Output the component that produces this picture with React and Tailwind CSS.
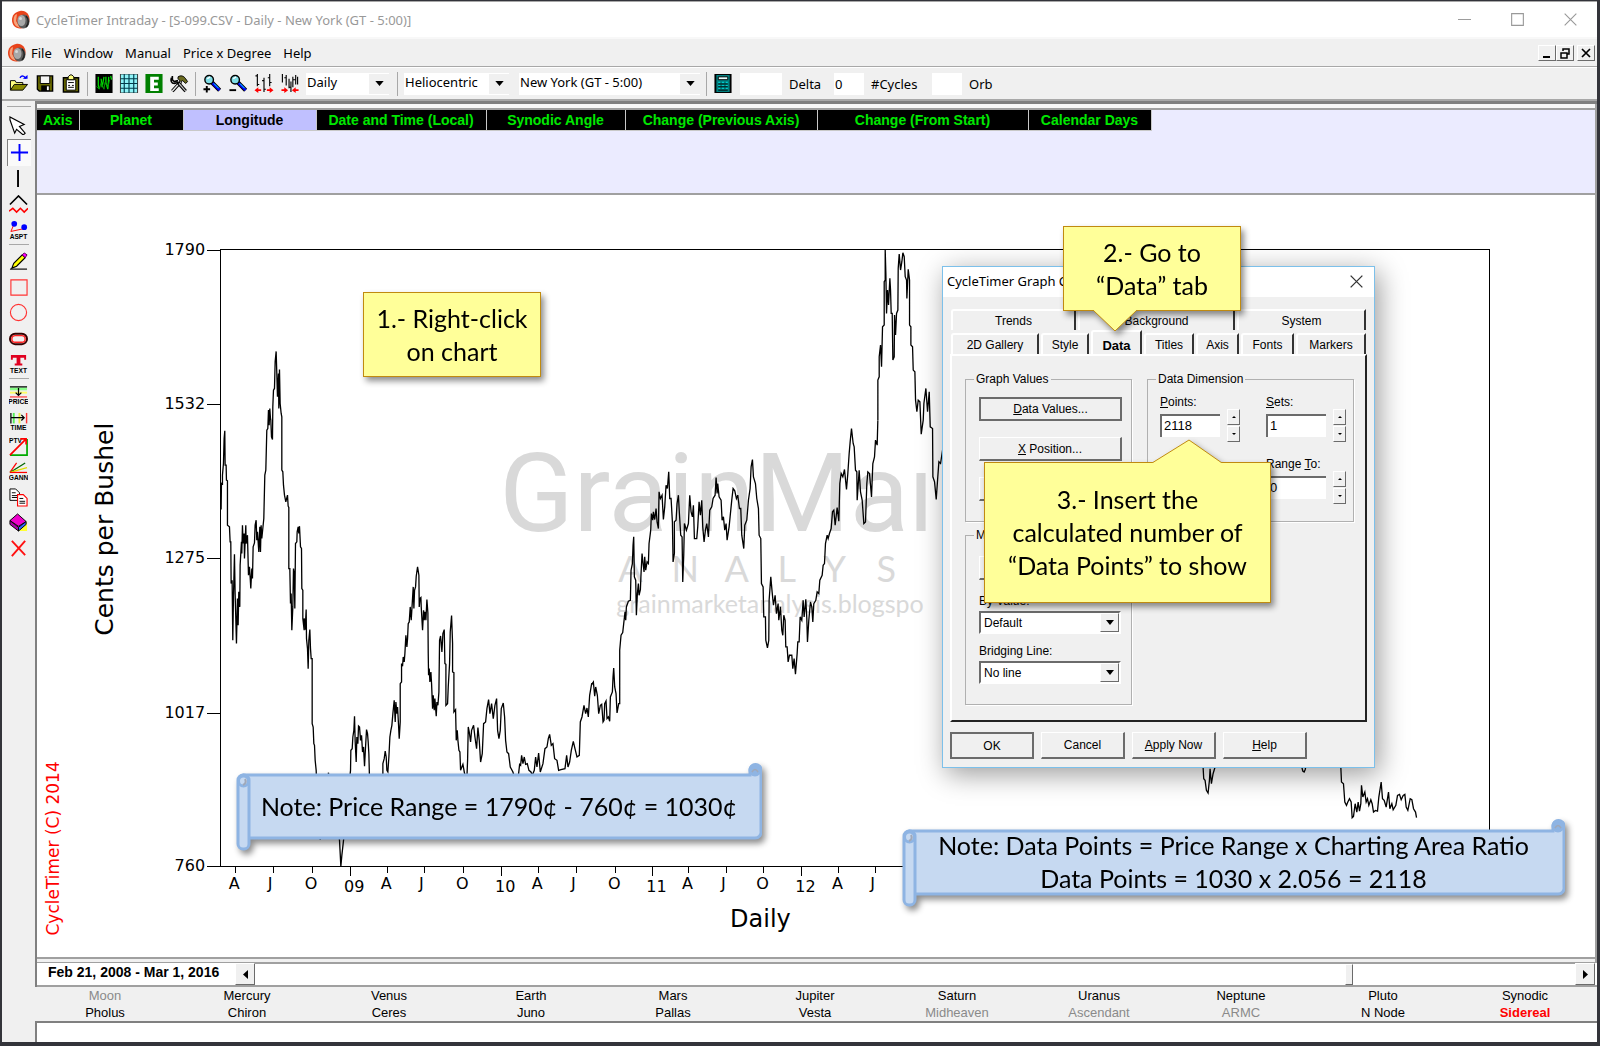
/**
 * App.jsx — CycleTimer Intraday main window
 *
 *   • title bar, menu bar, toolbar, drawing tools
 *   • price chart with the graph control dialog
 *   • numbered callouts and notes over the chart
 */

// ── Fonts ──────────────────────────────────────────────
const UI = "font-['Noto_Sans','Open_Sans',sans-serif]"
const ARIAL = "font-['Liberation_Sans',Arial,sans-serif]"
const NOTE = "font-['Lato','Open_Sans',sans-serif]"

const RAISED = 'border border-t-white border-l-white border-r-[#6b6b6b] border-b-[#6b6b6b] bg-[#f0f0f0]'

const MENUS = ['File', 'Window', 'Manual', 'Price x Degree', 'Help']

const AXIS_COLUMNS = [
  { label: 'Axis', width: 'w-[42px]' },
  { label: 'Planet', width: 'w-[104px]' },
  { label: 'Longitude', width: 'w-[133px]', active: true },
  { label: 'Date and Time (Local)', width: 'w-[170px]' },
  { label: 'Synodic Angle', width: 'w-[139px]' },
  { label: 'Change (Previous Axis)', width: 'w-[192px]' },
  { label: 'Change (From Start)', width: 'w-[211px]' },
  { label: 'Calendar Days', width: 'w-[123px]' },
]

const PLANETS = [
  [{ label: 'Moon', off: true }, { label: 'Pholus' }],
  [{ label: 'Mercury' }, { label: 'Chiron' }],
  [{ label: 'Venus' }, { label: 'Ceres' }],
  [{ label: 'Earth' }, { label: 'Juno' }],
  [{ label: 'Mars' }, { label: 'Pallas' }],
  [{ label: 'Jupiter' }, { label: 'Vesta' }],
  [{ label: 'Saturn' }, { label: 'Midheaven', off: true }],
  [{ label: 'Uranus' }, { label: 'Ascendant', off: true }],
  [{ label: 'Neptune' }, { label: 'ARMC', off: true }],
  [{ label: 'Pluto' }, { label: 'N Node' }],
  [{ label: 'Synodic' }, { label: 'Sidereal', hot: true }],
]

// ── Chart data ─────────────────────────────────────────
const PRICE_TICKS = [
  { y: 250, label: '1790' },
  { y: 404, label: '1532' },
  { y: 558, label: '1275' },
  { y: 713, label: '1017' },
  { y: 866, label: '760' },
]

const DATE_TICKS = [
  [235, 'A'], [273, 'J'], [312, 'O'], [350, '09'], [387, 'A'], [424, 'J'], [463, 'O'],
  [501, '10'], [538, 'A'], [576, 'J'], [615, 'O'], [652, '11'], [688, 'A'], [726, 'J'],
  [763, 'O'], [801, '12'], [838, 'A'], [875, 'J'], [914, 'O'],
]

// Each run is stored at three units per pixel from its own origin
const PRICE_RUNS = [
  {
    origin: [200, 230],
    points:
      '63,838 64,760 67,762 67,735 70,700 72,625 74,602 75,705 78,705 79,750 82,752 82,885 88,890 90,935 92,935 93,1060 96,1050 98,1230 100,1100 103,972 105,1090 109,1240 112,1105 114,1185 116,1085 119,1130 120,1005 124,935 125,970 127,885 129,940 132,910 133,985 137,885 138,940 142,915 145,1035 148,1010 150,1040 152,1075 155,1015 157,1045 159,950 163,938 165,885 168,870 170,930 172,905 176,965 179,890 181,965 183,885 185,925 188,895 191,865 194,735 197,720 200,600 203,595 205,540 207,585 209,535 211,565 212,570 214,620 217,628 218,530 220,480 223,475 225,395 228,364 230,430 232,500 235,430 236,535 238,418 240,520 243,550 245,560 245,720 248,725 250,765 253,795 257,815 262,795 264,828 266,832 266,1015 269,1015 271,1120 273,1090 275,1200 278,1130 280,1015 282,1030 284,1135 286,940 290,935 291,905 294,890 296,910 298,888 301,950 304,955 305,1075 308,1080 308,1165 312,1200 312,1165',
  },
  {
    origin: [200, 540],
    points:
      '312,235 315,268 318,208 319,295 322,325 324,385 326,300 329,268 331,325 333,355 336,355 336,550 339,560 341,610 343,615 345,660 348,690 349,720 355,780 360,898 365,860 372,780 380,730 385,697 390,760 400,800 410,840 418,900 422,978 425,945 430,900 436,850 442,780 448,720 451,690 452,630 456,625 458,590 461,570 463,528 465,605 468,665 470,590 473,610 475,557 478,560 481,600 484,585 487,635 490,620 493,678 496,620 499,568 502,580 504,605 506,640 508,720 520,780 535,730 548,700 548,670 552,655 555,632 558,650 560,690 563,695 566,650 569,590 572,570 575,555 578,520 582,480 585,545 587,485 590,520 592,500 595,555 597,595 600,545 600,430 604,425 604,370 607,378 609,350 612,365 614,340 617,285 620,320 622,295 624,250 627,245 630,200 633,240 636,190 639,140 641,205 643,150 646,140 648,108 652,80 656,105 657,200 659,175 662,172 663,200 667,270 670,210 672,240 674,215 677,240 680,178 683,218 684,340 685,405 687,385 689,425 692,395 694,430 697,505 699,465 702,510 704,475 708,528 710,485 713,495 716,455 718,300 721,287 725,335 728,280 732,268 734,370 737,372 737,495 742,490 744,440 748,370 750,275 754,226 757,310 757,395 761,397 761,515 766,508 768,600 771,570 773,600 776,630 779,635 781,690 788,672 793,700 800,710 802,660 804,560 807,575 811,605 814,570 820,555 824,590 829,625 833,562 837,600 841,665 846,640 850,550 856,545 860,505 865,478 869,520 874,490 879,535 884,495 889,475 892,570 896,595 900,570 903,505 909,488 913,530 916,600 920,635 925,640 930,680 938,695 945,720 955,700 958,672 961,675 964,645 968,670 972,650 976,672 981,670 986,690 992,695 996,705 1002,690 1006,650 1010,680 1015,638 1020,695 1028,670 1034,625 1040,620 1044,595 1048,582 1053,615 1058,610 1063,655 1070,660 1075,690 1082,688 1094,685 1099,645 1103,680 1108,665 1113,630 1119,603 1124,625 1130,650 1137,645 1140,545 1145,530 1151,495 1156,520 1160,503 1164,530 1168,465 1174,430 1180,428',
  },
  {
    origin: [590, 420],
    points:
      '3,795 9,785 13,828 16,800 21,825 25,880 30,855 34,852 38,905 41,900 43,850 47,842 50,895 54,890 58,903 60,830 66,815 68,770 70,743 73,800 77,820 80,878 85,850 88,850 88,690 92,645 97,637 100,610 104,575 106,600 108,560 114,543 120,540 122,450 126,430 128,375 130,350 132,470 136,480 138,585 141,520 144,490 146,525 150,508 152,460 155,400 158,430 161,455 163,410 166,450 170,425 174,430 176,370 181,330 183,280 187,300 189,275 193,298 197,265 200,305 204,325 206,215 210,235 215,225 219,298 223,260 227,195 231,205 235,155 238,235 242,235 246,305 248,425 252,400 252,305 257,300 260,250 264,225 267,280 271,345 275,350 277,485 280,405 282,310 288,330 294,310 298,225 302,275 306,290 309,255 312,355 319,355 322,320 326,245 330,285 334,240 337,320 341,365 345,330 349,310 354,350 358,270 364,260 368,235 374,225 377,172 380,220 382,190 386,230 392,240 395,300 399,290 403,330 407,310 410,360 416,320 419,290 424,240 428,205 433,212 438,235 442,225 447,265 451,265 454,345 460,385 463,315 469,300 474,240 479,205 482,140 486,118 489,170 495,190 499,235 504,265 506,345 511,355 513,490 518,500 520,590 525,590 526,660 531,683 535,660 536,540 541,470 545,515 549,555 554,525 558,580 563,550 565,600 570,560 574,630 577,645 580,585 584,600 586,680 590,680 593,725 597,705 604,705 607,745 611,715 615,762 620,700 622,665 626,665 629,590 634,600 638,540 641,590 646,537 649,595 651,665 655,600 660,545 664,560 667,605 670,550 676,540 680,515 685,520 688,480 695,465 698,435 702,430 705,370 710,345 713,355 717,340 722,325 726,275 730,270 734,315 740,262 745,303 748,190 752,160 757,170 762,148 768,208 772,160 776,100 779,65 783,25 788,70 791,80 795,150 799,155 800,240 806,150 810,215 815,240 820,310 825,305 829,190 832,155 837,160 843,230 847,130 852,110 855,60 860,75 862,0',
  },
  {
    origin: [780, 230],
    points:
      '292,570 292,450 296,440 296,380 300,345 303,410 306,290 311,285 311,155 314,150 314,60 316,130 318,250 321,180 324,225 328,145 330,180 332,250 335,250 337,390 341,380 342,255 345,315 348,250 352,240 353,115 356,72 360,120 364,95 367,68 371,80 374,140 378,150 379,205 383,118 387,150 387,285 391,290 391,345 396,350 398,420 403,425 405,510 409,545 413,510 418,515 422,612 428,570 430,520 436,475 441,545 446,485 449,590 456,595 457,740 462,755 467,808 471,750 475,695 480,700 486,660 492,640',
  },
  {
    origin: [1160, 740],
    points: '127,80 129,115 133,120 137,150 142,158 146,120 148,85 152,130 157,100 163,80',
  },
  {
    origin: [1160, 740],
    points: '423,80 426,92 430,95 433,88 435,80',
  },
  {
    origin: [1160, 740],
    points:
      '540,80 542,125 548,130 552,185 557,195 561,185 566,175 571,185 574,232 578,228 583,190 588,215 592,185 596,212 600,190 602,135 606,170 612,155 616,185 620,175 624,195 630,178 634,190 638,215 644,210 650,212 654,170 661,125 665,175 670,180 676,200 683,155 687,205 693,190 697,208 705,195 710,165 716,162 721,178 727,165 732,162 736,200 741,210 748,175 753,178 758,205 764,215 767,232',
  },
]

// ── Icons ──────────────────────────────────────────────
function Icon({ children, className = 'size-5' }) {
  return (
    <svg viewBox="0 0 20 20" className={`block shrink-0 ${className}`} fill="none" aria-hidden="true">
      {children}
    </svg>
  )
}

function AppLogo() {
  return (
    <Icon>
      <path d="M9 1c6-1 10 4 9.500 9S14 19 9 18.500 1 15 1 10 4 2 9 1Z" fill="#e8431b" />
      <path d="M4 5c-2 3-2 8 1 11l4 2-4-7 1-7Z" fill="#f7a27a" />
      <ellipse cx="12.500" cy="11.500" rx="6" ry="7" fill="#5c5c5c" />
      <ellipse cx="10.500" cy="10.500" rx="4" ry="5.500" fill="#a8a8a8" />
      <circle cx="9.500" cy="8.500" r="1.500" fill="#d8d8d8" />
      <path d="M15 6c3 3 3 8 0 11" stroke="#222" strokeWidth="1.500" />
    </Icon>
  )
}

const TOOLBAR_FILE = [
  {
    label: 'Open',
    art: (
      <>
        <path d="M1 17V7h5l1 2h7v3" fill="#ffff80" stroke="#000" />
        <path d="M1 17 5 11h14l-5 6Z" fill="#8a8a00" stroke="#000" />
        <path d="M11 4c2-3 5-2 6 1" stroke="#00f" strokeWidth="1.500" />
        <path d="M14 5h5V1Z" fill="#00f" />
      </>
    ),
  },
  {
    label: 'Save',
    art: (
      <>
        <path d="M2 2h16v16H4l-2-2Z" fill="#6b6b00" stroke="#000" strokeWidth="1.500" />
        <path d="M5 2h10v8H5Z" fill="#f4f4f4" stroke="#000" />
        <path d="M6 12h9v6H6Z" fill="#000" />
        <path d="M12 13h2v4h-2Z" fill="#fff" />
      </>
    ),
  },
  {
    label: 'Paste',
    art: (
      <>
        <path d="M2 4h16v15H2Z" fill="#6b6b00" stroke="#000" strokeWidth="1.500" />
        <path d="M5 6h10v11H5Z" fill="#fff" stroke="#000" />
        <path d="M7 6V3l2-2h2l2 2v3Z" fill="#ffff80" stroke="#000" />
        <path d="M7 9h6M7 12h2m2 0h2M7 14h6" stroke="#000" />
      </>
    ),
  },
]

const TOOLBAR_CHART = [
  {
    label: 'Price chart',
    art: (
      <>
        <path d="M1 0h18v20H1Z" fill="#000" />
        <path d="M4 3v9l1 3M7 5l1 9 2-11M12 3v6l2 7 1-13M17 2l1 4" stroke="#00e000" strokeWidth="1.300" />
        <path d="M2 13l3 3 2-7 3 7 1-7 3 5 2-8" stroke="#00a000" />
      </>
    ),
  },
  {
    label: 'Grid',
    art: (
      <>
        <path d="M1 0h18v20H1Z" fill="#8ff4f8" stroke="#333" />
        <path d="M5 0v20M10 0v20M15 0v20M1 5h18M1 10h18M1 15h18" stroke="#003a4a" strokeWidth="1.200" />
      </>
    ),
  },
  {
    label: 'Ephemeris',
    art: (
      <>
        <path d="M1 0h18v20H1Z" fill="#008000" />
        <path d="M6 3h9v3h-5v3h4v3h-4v3h5v3H6V3Z" fill="#fff" />
      </>
    ),
  },
  {
    label: 'Tools',
    art: (
      <>
        <path d="m3 18 9-10" stroke="#000" strokeWidth="3.500" />
        <path d="m3 18 9-10" stroke="#e8e8e8" strokeWidth="1.500" />
        <path d="m9 9 8 9" stroke="#000" strokeWidth="3.500" />
        <path d="m10 10 7 8" stroke="#c0c0c0" strokeWidth="1.200" />
        <path d="M9 3c3-2 6-1 8 2l2 3-2 2-3-3-2 1-3-3Z" fill="#6b6b20" stroke="#000" />
        <path d="M3 2v4l2 2 4-1M2 4c-1 3 0 6 3 6l4-1" stroke="#000" strokeWidth="1.700" />
      </>
    ),
  },
]

function Lens({ minus }) {
  return (
    <>
      <path d="m10 9 8 8" stroke="#000" strokeWidth="4.500" />
      <path d="m10 9 8 8" stroke="#00f" strokeWidth="2.500" />
      <path d="m12 10 5 5" stroke="#0ff" strokeWidth="1" />
      <circle cx="7" cy="6" r="4.500" fill="#7fdde6" stroke="#000" strokeWidth="1.500" />
      <path d="M5 5l3-2" stroke="#fff" strokeWidth="1.500" />
      <path d={minus ? 'M1 17h7' : 'M1 16h7M4.500 12.500v7'} stroke="#000" strokeWidth="2" />
    </>
  )
}

const TOOLBAR_ZOOM = [
  { label: 'Zoom in', art: <Lens /> },
  { label: 'Zoom out', art: <Lens minus /> },
  {
    label: 'Spread bars',
    art: (
      <>
        <path d="M3 0v13M1 2h2M3 11h2M10 4v15M8 7h2M10 16h2M16 0v13M14 4h2M16 9h2" stroke="#000" strokeWidth="1.200" />
        <path d="M0 17 4 14v2h3v2H4v2ZM20 17 16 14v2h-3v2h3v2Z" fill="#f00" />
      </>
    ),
  },
  {
    label: 'Squeeze bars',
    art: (
      <>
        <path d="M2 0v9M4 4h2M6 1v11M9 5v10M11 8v11M13 3v11M16 1v10M18 3v8M9 14h2M13 6h3" stroke="#000" strokeWidth="1.200" />
        <path d="M8 17 4 14v2H1v2h3v2ZM12 17 16 14v2h3v2h-3v2Z" fill="#f00" />
      </>
    ),
  },
]

function TinyLabel({ y, children }) {
  return (
    <text x="10" y={y} textAnchor="middle" fontFamily="Liberation Sans" fontWeight="700" fontSize="7" fill="#000">
      {children}
    </text>
  )
}

const DRAW_GROUPS = [
  {
    height: 'h-[130px]',
    tools: [
      { label: 'Select', art: <path d="M1 1v3l5 14 2-4 7 6 2-2-6-7 5-2Z" fill="#fff" stroke="#000" strokeWidth="1.200" /> },
      { label: 'Crosshair', pressed: true, art: <path d="M10 1v18M1 10h18" stroke="#00f" strokeWidth="2" /> },
      { label: 'Vertical line', art: <path d="M9.500 1v18" stroke="#000" strokeWidth="2" /> },
      {
        label: 'Zigzag',
        art: (
          <>
            <path d="M1 10 10 1l9 9" stroke="#000" strokeWidth="1.700" />
            <path d="m0 17 4-3 4 4 4-4 4 4 4-4" stroke="#f00" strokeWidth="1.700" />
          </>
        ),
      },
      {
        label: 'Aspect',
        art: (
          <>
            <path d="M5 4 2 11l14-3" stroke="#f00" />
            <circle cx="5.500" cy="3" r="3" fill="#00f" />
            <circle cx="16" cy="6.500" r="3" fill="#00f" />
            <TinyLabel y={19}>ASPT</TinyLabel>
          </>
        ),
      },
    ],
  },
  {
    height: 'h-[128px]',
    tools: [
      {
        label: 'Pencil',
        art: (
          <>
            <path d="M3 17 5 12l9-9 3 3-9 9Z" fill="#ff0" stroke="#000" strokeWidth="1.200" />
            <path d="m14 3 2-2 3 2-2 3Z" fill="#f0f" stroke="#505" />
            <path d="M1 18h18" stroke="#000" strokeWidth="1.200" />
          </>
        ),
      },
      { label: 'Rectangle', art: <path d="M2 2h17v16H2Z" stroke="#f33" strokeWidth="1.200" /> },
      { label: 'Circle', art: <circle cx="10" cy="10" r="8.500" stroke="#f33" strokeWidth="1.200" /> },
      {
        label: 'Ellipse',
        art: (
          <>
            <rect x="1" y="5" width="18" height="11" rx="5.500" fill="#f0f0f0" stroke="#300" strokeWidth="2" />
            <rect x="3" y="7" width="14" height="7" rx="3.500" stroke="#f22" strokeWidth="1.500" />
          </>
        ),
      },
      {
        label: 'Text',
        art: (
          <>
            <path d="M2 0h16v5h-2V3h-4v6h2v2H6V9h2V3H4v2H2Z" fill="#e00020" />
            <TinyLabel y={19}>TEXT</TinyLabel>
          </>
        ),
      },
    ],
  },
  {
    height: 'h-[178px]',
    tools: [
      {
        label: 'Price',
        art: (
          <>
            <path d="M1 3h18" stroke="#8f8" strokeWidth="3" />
            <path d="M1 7h18" stroke="#ff6" strokeWidth="2" />
            <path d="M1 11.500h18" stroke="#f55" strokeWidth="1.500" />
            <path d="M1 1h18M10 2v8m-3-3 3 3 3-3" stroke="#000" strokeWidth="1.300" />
            <TinyLabel y={19}>PRICE</TinyLabel>
          </>
        ),
      },
      {
        label: 'Time',
        art: (
          <>
            <path d="M5 1v11" stroke="#5e5" strokeWidth="2" />
            <path d="M11 1v11" stroke="#ee4" strokeWidth="2" />
            <path d="M18.500 1v11" stroke="#f33" strokeWidth="1.500" />
            <path d="M2 1v11M2 6h14m-3-3 3 3-3 3" stroke="#000" strokeWidth="1.300" />
            <TinyLabel y={19}>TIME</TinyLabel>
          </>
        ),
      },
      {
        label: 'Price time vector',
        art: (
          <>
            <text x="0" y="6" fontFamily="Liberation Sans" fontWeight="700" fontSize="7" fill="#000">PTV</text>
            <path d="M19 2v17H1" stroke="#0a0" strokeWidth="1.800" />
            <path d="M1 19 18 2m-6 0h6v6" stroke="#f00" strokeWidth="1.800" />
          </>
        ),
      },
      {
        label: 'Gann',
        art: (
          <>
            <path d="M1 11 8 1" stroke="#f00" strokeWidth="1.300" />
            <path d="M1 11 17 1" stroke="#060" strokeWidth="1.300" />
            <path d="M1 11 19 6" stroke="#dd0" strokeWidth="1.300" />
            <path d="M1 11h18" stroke="#f00" strokeWidth="1.300" />
            <TinyLabel y={19}>GANN</TinyLabel>
          </>
        ),
      },
      {
        label: 'Copy',
        art: (
          <>
            <path d="M1 1h6l4 4v8H1Z" fill="#fff" stroke="#000" />
            <path d="M3 5h4M3 8h6M3 10h6" stroke="#000" />
            <path d="M9 7h6l4 4v8H9Z" fill="#fff" stroke="#f00" strokeWidth="1.200" />
            <path d="M11 11h4M11 14h6M11 16h6" stroke="#000" />
          </>
        ),
      },
      {
        label: 'Erase',
        art: (
          <>
            <path d="M10 19h9V9Z" fill="#ff3" />
            <path d="m1 8 8-7 9 8-8 5Z" fill="#e0c" stroke="#000" />
            <path d="m1 8 9 7v4l-9-7Z" fill="#a0a" stroke="#000" />
            <path d="m10 15 8-6v3l-8 7Z" fill="#36f" stroke="#000" />
          </>
        ),
      },
      { label: 'Delete', art: <path d="M3 2 17 17M17 2 3 18" stroke="#f11" strokeWidth="2" /> },
    ],
  },
]

const CALC_ART = (
  <>
    <path d="M2 0h16v20H2Z" fill="#008080" stroke="#000" strokeWidth="2" />
    <path d="M5 3h10v3H5Z" fill="#e8ffff" stroke="#000" />
    <path d="M5 9h2M9 9h2M13 9h2M5 12h2M9 12h2M13 12h2M5 15h2M9 15h2M13 15h2" stroke="#0cc" strokeWidth="1.500" />
    <path d="M5 10.500h10M5 13.500h10M5 17h10" stroke="#000" />
  </>
)

// ── Toolbar parts ──────────────────────────────────────
function Divider() {
  return <span className="h-6 w-px shrink-0 bg-[#a8a8a8]" />
}

function ToolGroup({ tools, gap = 'gap-[6px]' }) {
  return (
    <div className={`flex ${gap}`}>
      {tools.map(({ label, art }) => (
        <button key={label} type="button" aria-label={label}>
          <Icon className="h-[19px] w-5">{art}</Icon>
        </button>
      ))}
    </div>
  )
}

function ToolbarSelect({ label, value, width }) {
  return (
    <div className={`relative h-[22px] shrink-0 bg-white ${width}`}>
      <select aria-label={label} className="block h-[19px] w-full appearance-none pl-px leading-4 outline-none">
        <option>{value}</option>
      </select>
      <span className="pointer-events-none absolute inset-y-px right-0 flex w-5 items-center justify-center bg-[#f0f0f0]">
        <svg viewBox="0 0 10 6" className="h-[5px] w-[9px]"><path d="M0 0h10L5 6Z" fill="#000" /></svg>
      </span>
    </div>
  )
}

function TitleBar() {
  return (
    <header className="flex h-[36px] items-center border-t border-[#a8a8a8] bg-white pl-[9px]">
      <AppLogo />
      <h1 className="ml-[5px] flex-1 text-[13px] text-[#999]">
        CycleTimer Intraday - [S-099.CSV - Daily - New York (GT - 5:00)]
      </h1>
      <div className="flex items-center gap-[40px] pr-5 text-[#999]">
        <button type="button" aria-label="Minimize"><Icon className="size-[13px]"><path d="M0 10h20" stroke="currentColor" strokeWidth="1.500" /></Icon></button>
        <button type="button" aria-label="Maximize"><Icon className="size-[13px]"><path d="M1 1h18v18H1Z" stroke="currentColor" strokeWidth="1.700" /></Icon></button>
        <button type="button" aria-label="Close"><Icon className="size-[13px]"><path d="m1 1 18 18M19 1 1 19" stroke="currentColor" strokeWidth="1.700" /></Icon></button>
      </div>
    </header>
  )
}

function MenuBar() {
  return (
    <nav className="flex h-[30px] items-center border-t-2 border-b border-t-[#f8f8f8] border-b-[#a8a8a8] bg-[#f0f0f0] pl-[5px]">
      <AppLogo />
      <ul className="ml-1 flex flex-1 gap-3">
        {MENUS.map((menu) => (
          <li key={menu}><button type="button">{menu}</button></li>
        ))}
      </ul>
      <div className="flex">
        <button type="button" aria-label="Minimize document" className={`flex h-4 w-[18px] items-center justify-center ${RAISED}`}>
          <svg viewBox="0 0 12 12" className="size-3"><path d="M2 10h7" stroke="#000" strokeWidth="2" /></svg>
        </button>
        <button type="button" aria-label="Restore document" className={`flex h-4 w-[18px] items-center justify-center ${RAISED}`}>
          <svg viewBox="0 0 12 12" className="size-3" fill="none"><path d="M4 4V2h6v5H8M2 6h6v5H2Z" stroke="#000" strokeWidth="1.500" /></svg>
        </button>
        <button type="button" aria-label="Close document" className={`mr-[2px] ml-[3px] flex h-4 w-[18px] items-center justify-center ${RAISED}`}>
          <svg viewBox="0 0 12 12" className="size-3"><path d="m2 2 8 8M10 2l-8 8" stroke="#000" strokeWidth="1.700" /></svg>
        </button>
      </div>
    </nav>
  )
}

function Toolbar() {
  return (
    <div className="flex h-[34px] items-center gap-[6px] border-t border-b-2 border-t-white border-b-[#a8a8a8] bg-[#f0f0f0] pl-[7px]">
      <ToolGroup tools={TOOLBAR_FILE} />
      <Divider />
      <ToolGroup tools={TOOLBAR_CHART} gap="gap-[5px]" />
      <Divider />
      <ToolGroup tools={TOOLBAR_ZOOM} />
      <ToolbarSelect label="Period" value="Daily" width="mr-[2px] w-[83px]" />
      <Divider />
      <ToolbarSelect label="Centre" value="Heliocentric" width="w-[105px]" />
      <ToolbarSelect label="Time zone" value="New York (GT - 5:00)" width="ml-1 w-[181px]" />
      <Divider />
      <div className="flex items-center gap-[7px]">
        <button type="button" aria-label="Calculator"><Icon className="h-[19px] w-5">{CALC_ART}</Icon></button>
        <input id="delta" defaultValue="" className="h-[22px] w-[42px] bg-white px-px" />
        <label htmlFor="delta" className="w-[38px]">Delta</label>
        <input id="cycles" defaultValue="0" className="h-[22px] w-[30px] bg-white px-px" />
        <label htmlFor="cycles" className="w-[54px]">#Cycles</label>
        <input id="orb" defaultValue="" className="h-[22px] w-[30px] bg-white px-px" />
        <label htmlFor="orb">Orb</label>
      </div>
    </div>
  )
}

function DrawingTools() {
  return (
    <aside className="flex w-[33px] shrink-0 flex-col items-center bg-[#f0f0f0] pt-[5px]">
      <span className="mb-[5px] h-[2px] w-6 border-t border-[#a8a8a8]" />
      {DRAW_GROUPS.map(({ height, tools }, i) => (
        <div key={tools[0].label} className="flex flex-col items-center">
          {i > 0 && <span className="mt-[1px] mb-[4px] h-px w-5 bg-[#a8a8a8]" />}
          <div className={`flex flex-col ${height}`}>
            {tools.map(({ label, art, pressed }) => (
              <button
                key={label}
                type="button"
                aria-label={label}
                className={`flex w-6 flex-1 items-center justify-center ${
                  pressed ? 'border-t border-l border-[#808080] bg-[#fafafa]' : ''
                }`}
              >
                <Icon className="size-[19px]">{art}</Icon>
              </button>
            ))}
          </div>
        </div>
      ))}
    </aside>
  )
}

function AxisTable() {
  return (
    <section className={`h-[87px] border-t-2 border-b-2 border-[#a0a0a0] bg-[#ebebff] ${ARIAL}`}>
      <table className="table-fixed border-collapse text-[14px] leading-[18px] font-bold">
        <thead>
          <tr>
            {AXIS_COLUMNS.map(({ label, width, active }) => (
              <th
                key={label}
                scope="col"
                className={`h-5 border-r border-b border-[#c8c8c8] p-0 whitespace-nowrap ${width} ${
                  active ? 'bg-[#c0c0ff] text-black' : 'bg-black text-[#00e800]'
                }`}
              >
                {label}
              </th>
            ))}
          </tr>
        </thead>
      </table>
    </section>
  )
}

// ── Chart ──────────────────────────────────────────────
function dateLabelX(x, label) {
  if (label.length > 1) return x + 4
  return label === 'J' ? x - 3 : x - 1
}

function PriceChart() {
  return (
    <svg viewBox="37 195 1557 762" className="block w-full" role="img" aria-label="Daily price in cents per bushel">
      <clipPath id="mark"><rect x="490" y="430" width="435" height="200" /></clipPath>
      <g clipPath="url(#mark)" fill="#d9d9d9">
        <text x="499" y="531" fontSize="109" fontFamily="Roboto">GrainMar</text>
        <text x="618 671 724 777 823 876" y="582" fontSize="36" fontFamily="Lato">ANALYS</text>
        <text x="616" y="613" fontSize="25" fontFamily="Lato">grainmarketanalysis.blogspo</text>
      </g>
      <g stroke="#000" strokeWidth="1" fill="none" shapeRendering="crispEdges">
        <rect x="220" y="249" width="1269" height="617" />
        {PRICE_TICKS.map(({ y }) => (
          <path key={y} d={`M207 ${y}h13`} />
        ))}
        {DATE_TICKS.map(([x, label]) => (
          <path key={x} d={`M${x} 866v${label.length > 1 ? 10 : 7}`} />
        ))}
      </g>
      <g fontFamily="DejaVu Sans" fontSize="16" fill="#000">
        {PRICE_TICKS.map(({ y, label }) => (
          <text key={y} x="205" y={y + 5} textAnchor="end">{label}</text>
        ))}
        {DATE_TICKS.map(([x, label]) => (
          <text key={x} x={dateLabelX(x, label)} y={label.length > 1 ? 892 : 889} textAnchor="middle">
            {label}
          </text>
        ))}
      </g>
      <g fontFamily="DejaVu Sans">
        <text x="760" y="927" fontSize="24" textAnchor="middle">Daily</text>
        <text transform="translate(113 529) rotate(-90)" fontSize="25" textAnchor="middle">Cents per Bushel</text>
        <text transform="translate(59 848) rotate(-90)" fontSize="17" textAnchor="middle" fill="#f00">CycleTimer (C) 2014</text>
      </g>
      {PRICE_RUNS.map(({ origin, points }) => (
        <polyline
          key={points.slice(0, 20)}
          points={points}
          transform={`translate(${origin[0]} ${origin[1]}) scale(0.3333)`}
          vectorEffect="non-scaling-stroke"
          fill="none"
          stroke="#000"
          strokeWidth="1.3"
        />
      ))}
    </svg>
  )
}

// ── Graph control dialog ───────────────────────────────
function Tab({ label, width, active }) {
  return (
    <button
      type="button"
      role="tab"
      aria-selected={Boolean(active)}
      className={`rounded-tl-[3px] border-t-2 border-r-2 border-l-2 border-t-white border-r-[#333] border-l-white ${width} ${
        active ? 'h-6 pt-1 text-[13px] font-bold' : 'h-[21px]'
      }`}
    >
      {label}
    </button>
  )
}

function PushButton({ hot, children, className = '', strong, ...rest }) {
  return (
    <button
      type="button"
      className={`bg-[#f0f0f0] ${
        strong
          ? 'border-2 border-[#6b6b6b]'
          : 'border-t border-r-2 border-b-2 border-l border-t-white border-r-[#6b6b6b] border-b-[#6b6b6b] border-l-white'
      } ${className}`}
      {...rest}
    >
      {hot && <u>{hot}</u>}
      {children}
    </button>
  )
}

function Spinner({ id, hot, rest, lead = '', value, name }) {
  return (
    <div className="w-20">
      {name ? (
        <span className="block h-[15px]" />
      ) : (
        <label htmlFor={id} className="block h-[15px] leading-4">{lead}<u>{hot}</u>{rest}</label>
      )}
      <div className="flex items-center justify-between">
        <input
          id={id}
          aria-label={name}
          defaultValue={value}
          className="h-[23px] w-[60px] border-t-2 border-l-2 border-[#6b6b6b] bg-white px-[2px] pb-[2px] text-[13px]"
        />
        <span className="flex flex-col">
          <button type="button" aria-label="Increase" className={`flex h-4 w-[13px] items-center justify-center ${RAISED}`}>
            <svg viewBox="0 0 4 2" className="h-[2px] w-1"><path d="M0 2h4L2 0Z" /></svg>
          </button>
          <button type="button" aria-label="Decrease" className={`mt-px flex h-4 w-[13px] items-center justify-center ${RAISED}`}>
            <svg viewBox="0 0 4 2" className="h-[2px] w-1"><path d="M0 0h4L2 2Z" /></svg>
          </button>
        </span>
      </div>
    </div>
  )
}

function DialogSelect({ id, label, value }) {
  return (
    <div>
      <label htmlFor={id} className="block h-[18px] leading-4">{label}</label>
      <div className="relative h-[23px] w-[142px] border-2 border-t-[#6b6b6b] border-r-white border-b-white border-l-[#6b6b6b] bg-white">
        <select id={id} className="h-full w-full appearance-none pl-[3px] outline-none">
          <option>{value}</option>
        </select>
        <span className={`pointer-events-none absolute inset-y-0 right-0 flex w-[19px] items-center justify-center ${RAISED}`}>
          <svg viewBox="0 0 8 5" className="h-[5px] w-2"><path d="M0 0h8L4 5Z" /></svg>
        </span>
      </div>
    </div>
  )
}

function GraphDialog() {
  return (
    <div
      role="dialog"
      aria-label="CycleTimer Graph Control"
      className={`absolute top-[71px] left-[905px] flex h-[502px] w-[433px] flex-col border border-[#7cc0ea] bg-[#f0f0f0] text-[12px] shadow-[4px_6px_26px_rgba(0,0,0,0.4)] ${ARIAL}`}
    >
      <div className={`flex h-[30px] items-center justify-between bg-white pr-[11px] pb-[2px] pl-1 text-[13px] ${UI}`}>
        <span>CycleTimer Graph C</span>
        <button type="button" aria-label="Close dialog"><Icon className="size-[13px]"><path d="m1 1 18 18M19 1 1 19" stroke="#333" strokeWidth="2" /></Icon></button>
      </div>

      <div role="tablist" className="mx-2 mt-3 flex flex-col">
        <div className="flex gap-[2px] pb-[3px]">
          <Tab label="Trends" width="w-[125px]" />
          <Tab label="Background" width="w-[157px]" />
          <Tab label="System" width="flex-1" />
        </div>
        <div className="flex h-[21px] items-end gap-[2px]">
          <Tab label="2D Gallery" width="w-[88px]" />
          <Tab label="Style" width="w-[48px]" />
          <Tab label="Data" width="w-[51px]" active />
          <Tab label="Titles" width="w-[50px]" />
          <Tab label="Axis" width="w-[43px]" />
          <Tab label="Fonts" width="w-[53px]" />
          <Tab label="Markers" width="flex-1" />
        </div>
      </div>

      <div className="mx-[7px] flex h-[368px] gap-[15px] border-2 border-t-white border-r-[#222] border-b-[#222] border-l-white pt-[15px] pl-[13px]">
        <div className="flex w-[167px] shrink-0 flex-col gap-[5px]">
          <fieldset className="h-[151px] border border-[#b0b0b0] pr-[9px] pl-[13px] shadow-[1px_1px_0_#fff]">
            <legend className="-ml-[5px] px-[2px] leading-4">Graph Values</legend>
            <div className="flex flex-col gap-4 pt-[10px]">
              <PushButton strong hot="D" className="h-6">ata Values...</PushButton>
              <PushButton hot="X" className="h-6"> Position...</PushButton>
              <PushButton aria-label="Y position" className="h-6" />
            </div>
          </fieldset>
          <fieldset className="h-[178px] border border-[#b0b0b0] pr-[9px] pl-[13px] shadow-[1px_1px_0_#fff]">
            <legend className="-ml-[5px] px-[2px] leading-4">M</legend>
            <div className="flex flex-col gap-[9px] pt-[13px]">
              <PushButton aria-label="Values" className="mb-1 h-6" />
              <DialogSelect id="by-value" label="By Value:" value="Default" />
              <DialogSelect id="bridging" label="Bridging Line:" value="No line" />
            </div>
          </fieldset>
        </div>

        <fieldset className="h-[151px] w-[207px] shrink-0 border border-[#b0b0b0] pr-[7px] pl-[12px] shadow-[1px_1px_0_#fff]">
          <legend className="-ml-[4px] px-[2px] leading-4">Data Dimension</legend>
          <div className="flex justify-between pt-[7px]">
            <Spinner id="points" hot="P" rest="oints:" value="2118" />
            <Spinner id="sets" hot="S" rest="ets:" value="1" />
          </div>
          <div className="flex justify-between pt-[14px]">
            <Spinner id="range-from" name="Range from" value="" />
            <Spinner id="range-to" lead="Range " hot="T" rest="o:" value="0" />
          </div>
        </fieldset>
      </div>

      <div className="flex gap-[7px] px-[7px] pt-[10px]">
        <PushButton strong className="h-[27px] w-[84px]">OK</PushButton>
        <PushButton className="h-[27px] w-[84px]">Cancel</PushButton>
        <PushButton hot="A" className="h-[27px] w-[84px]">pply Now</PushButton>
        <PushButton hot="H" className="h-[27px] w-[84px]">elp</PushButton>
      </div>
    </div>
  )
}

// ── Callouts and notes ─────────────────────────────────
function Callout({ place, lines, pointer }) {
  return (
    <div
      className={`absolute flex flex-col items-center justify-center border border-[#c08a10] bg-[#ffff99] text-center text-[25px] leading-[33px] whitespace-nowrap drop-shadow-[3px_4px_3px_rgba(0,0,0,0.45)] ${NOTE} ${place}`}
    >
      {lines.map((line) => (
        <p key={line}>{line}</p>
      ))}
      {pointer === 'down' && (
        <svg viewBox="0 0 46 22" className="absolute top-full left-[28px] h-[22px] w-[46px]" aria-hidden="true">
          <path d="M1 0 23 21 45 0" fill="#ffff99" stroke="#c08a10" />
        </svg>
      )}
      {pointer === 'up' && (
        <svg viewBox="0 0 72 24" className="absolute bottom-full left-[166px] h-[24px] w-[72px]" aria-hidden="true">
          <path d="M1 24 38 1 71 24" fill="#ffff99" stroke="#c08a10" />
        </svg>
      )}
    </div>
  )
}

function ScrollNote({ place, width, lines }) {
  const right = width - 2
  return (
    <div className={`absolute h-[88px] drop-shadow-[3px_4px_3px_rgba(0,0,0,0.45)] ${place}`}>
      <svg viewBox={`0 0 ${width} 88`} className="absolute inset-0 h-full w-full" aria-hidden="true">
        <g fill="#c6d9f1" stroke="#8eb4e3" strokeWidth="3">
          <path d={`M8 12H${right - 10}V7a5 5 0 0 1 11 0V68a6 6 0 0 1-6 7H8Z`} />
          <circle cx={right - 5} cy="7" r="5" fill="#8eb4e3" />
          <rect x="2" y="12" width="11" height="74" rx="5" />
          <circle cx="7.500" cy="18" r="5" />
        </g>
        <path d={`M${right - 8} 9q3-5 6 0`} stroke="#a0a8b8" strokeWidth="1.500" fill="none" />
        <path d="M7 22q4-2 2-6" stroke="#a0a8b8" strokeWidth="2" fill="none" />
      </svg>
      <div className={`relative flex h-[86px] flex-col items-center justify-center text-[25px] leading-[33px] whitespace-nowrap ${NOTE}`}>
        {lines.map((line) => (
          <p key={line}>{line}</p>
        ))}
      </div>
    </div>
  )
}

// ── Bottom strips ──────────────────────────────────────
function RangeBar() {
  return (
    <div className="flex h-[25px] border-t border-b-2 border-[#a0a0a0] bg-white pr-[2px]">
      <div className={`w-[198px] pl-[11px] text-[14px] leading-[19px] font-bold whitespace-nowrap ${ARIAL}`}>
        Feb 21, 2008 - Mar 1, 2016
      </div>
      <button type="button" aria-label="Scroll back" className={`flex w-5 items-center justify-center ${RAISED}`}>
        <svg viewBox="0 0 5 9" className="h-[9px] w-[5px]"><path d="M5 0v9L0 4.500Z" /></svg>
      </button>
      <div className="flex flex-1 border-t border-[#a0a0a0]">
        <span className="w-[1090px] shrink" />
        <span className={`w-2 shrink-0 ${RAISED}`} />
      </div>
      <button type="button" aria-label="Scroll forward" className={`flex w-5 items-center justify-center ${RAISED}`}>
        <svg viewBox="0 0 5 9" className="h-[9px] w-[5px]"><path d="M0 0v9l5-4.500Z" /></svg>
      </button>
    </div>
  )
}

function PlanetBar() {
  return (
    <div className={`-ml-[2px] grid h-[34px] grid-cols-11 bg-[#f0f0f0] text-center text-[13px] leading-[17px] ${ARIAL}`}>
      {PLANETS.map((pair) => (
        <div key={pair[0].label} className="flex flex-col pr-[2px]">
          {pair.map(({ label, off, hot }) => (
            <button
              key={label}
              type="button"
              className={`h-[17px] ${off ? 'text-[#8a8a8a]' : ''} ${hot ? 'font-bold text-[#f00]' : ''}`}
            >
              {label}
            </button>
          ))}
        </div>
      ))}
    </div>
  )
}

export default function App() {
  return (
    <div className="min-h-screen bg-[#33343a] pt-px pr-[3px] pb-[3px] pl-[2px]">
      <div className={`flex flex-col bg-[#f0f0f0] text-[13px] leading-5 text-black ${UI}`}>
        <TitleBar />
        <MenuBar />
        <Toolbar />

        <div className="flex">
          <DrawingTools />
          <main className="flex min-w-0 flex-1 flex-col border-t-3 border-l-2 border-[#808080]">
            <div className="border-r-2 border-[#a0a0a0] bg-white">
              <div className="h-[4px] bg-[#f8f8f8]" />
              <AxisTable />
              <div className="relative">
                <PriceChart />
                <GraphDialog />
                <Callout place="top-[97px] left-[326px] h-[85px] w-[178px]" lines={['1.- Right-click', 'on chart']} />
                <Callout place="top-[31px] left-[1026px] h-[85px] w-[178px]" lines={['2.- Go to', '“Data” tab']} pointer="down" />
                <Callout
                  place="top-[267px] left-[947px] h-[141px] w-[287px]"
                  lines={['3.- Insert the', 'calculated number of', '“Data Points” to show']}
                  pointer="up"
                />
                <ScrollNote place="top-[568px] left-[199px] w-[526px]" width={526} lines={['Note: Price Range = 1790¢ - 760¢ = 1030¢']} />
                <ScrollNote
                  place="top-[624px] left-[865px] w-[663px]"
                  width={663}
                  lines={['Note: Data Points = Price Range x Charting Area Ratio', 'Data Points = 1030 x 2.056 = 2118']}
                />
              </div>
              <div className="h-[5px] border-t-2 border-[#a0a0a0] bg-[#f0f0f0]" />
            </div>
            <RangeBar />
            <PlanetBar />
            <div className="h-[21px] border-t-2 border-[#808080] bg-white" />
          </main>
        </div>
      </div>
    </div>
  )
}
